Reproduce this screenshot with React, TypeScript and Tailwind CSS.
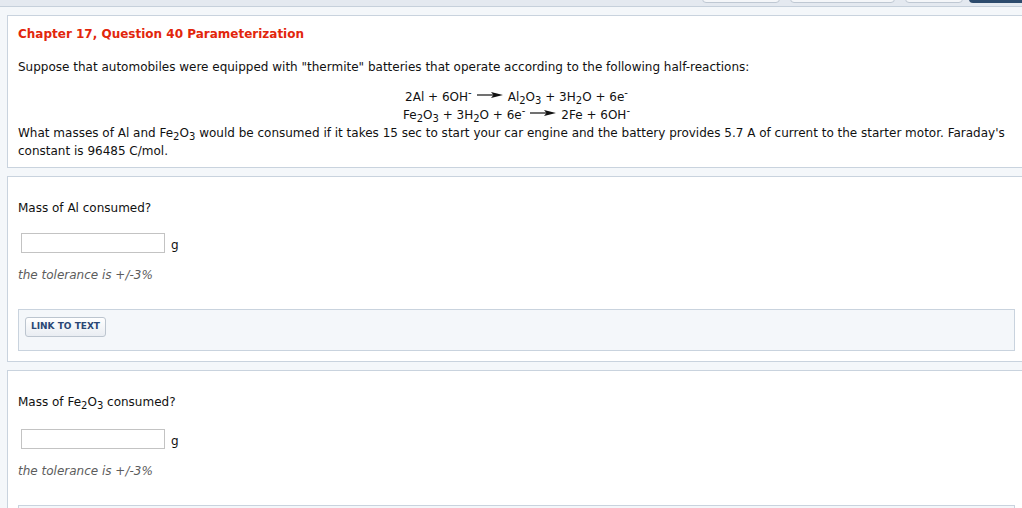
import React from "react";

const Arrow = () => (
  <svg width="26" height="8" viewBox="0 0 26 8" className="inline-block mx-[5px] align-[2px]">
    <line x1="0" y1="4" x2="18" y2="4" stroke="#111" strokeWidth="1.2" />
    <path d="M14 1 L26 4 L14 7 L16.5 4 Z" fill="#111" />
  </svg>
);

const Sub = ({ children }: { children: React.ReactNode }) => (
  <span className="text-[10px] leading-none align-[-3px]">{children}</span>
);
const Sup = () => <span className="text-[10px] leading-none align-[5px]">-</span>;

const AnswerCard = ({ label, topGap }: { label: React.ReactNode; topGap: string }) => (
  <div className="w-[1019px] shrink-0 bg-white border border-[#c9d3de] px-[10px] pt-[22px] pb-[10px]">
    <div className="leading-[18px]">{label}</div>
    <div className={`flex items-end ${topGap} ml-[3px]`}>
      <div className="w-[144px] h-[20px] border border-[#c3c3c3] bg-white" />
      <span className="ml-[6px] leading-[16px]">g</span>
    </div>
    <div className="mt-[13px] leading-[18px] italic text-[#5c5c5c]">the tolerance is +/-3%</div>
    <div className="mt-[25px] h-[42px] border border-[#c9d3de] bg-[#f4f7fa] pt-[6px] px-[6px]">
      <button className="h-[20px] px-[5px] rounded-[3px] border border-[#bcc5cf] bg-gradient-to-b from-white to-[#e9edf2] text-[9px] font-bold text-[#2a4775] leading-none">
        LINK TO TEXT
      </button>
    </div>
  </div>
);

export default function App() {
  return (
    <div
      className="w-[1022px] h-[508px] overflow-hidden bg-[#f4f7fa] text-[12px] text-[#111]"
      style={{ fontFamily: '"DejaVu Sans", Verdana, sans-serif' }}
    >
      <div className="h-[7px] box-border bg-[#e4e9f0] border-b border-[#c6d0db] pb-[3px] flex items-end justify-end overflow-hidden">
        <div className="w-[78px] h-[24px] shrink-0 rounded-[4px] border border-[#bfc8d3] bg-[#f4f6f9]" />
        <div className="w-[105px] h-[24px] shrink-0 ml-[10px] rounded-[4px] border border-[#bfc8d3] bg-[#f4f6f9]" />
        <div className="w-[58px] h-[24px] shrink-0 ml-[10px] rounded-[4px] border border-[#bfc8d3] bg-[#f4f6f9]" />
        <div className="w-[62px] h-[24px] shrink-0 ml-[6px] mr-[-9px] rounded-[4px] bg-[#2d4b6d]" />
      </div>
      <div className="pl-[7px] pt-[8px] flex flex-col gap-[8px]">
        <div className="w-[1019px] shrink-0 bg-white border border-[#c9d3de] px-[10px] pt-[9px] pb-[7px]">
          <div className="leading-[18px] font-bold text-[#e2260c]">Chapter 17, Question 40 Parameterization</div>
          <div className="mt-[15px] leading-[18px]">
            Suppose that automobiles were equipped with "thermite" batteries that operate according to the following half-reactions:
          </div>
          <div className="mt-[12px] text-center">
            <div className="leading-[18px]">
              2Al + 6OH<Sup />
              <Arrow />
              Al<Sub>2</Sub>O<Sub>3</Sub> + 3H<Sub>2</Sub>O + 6e<Sup />
            </div>
            <div className="leading-[18px]">
              Fe<Sub>2</Sub>O<Sub>3</Sub> + 3H<Sub>2</Sub>O + 6e<Sup />
              <Arrow />
              2Fe + 6OH<Sup />
            </div>
          </div>
          <div className="leading-[18px]">
            <span className="whitespace-nowrap">
              What masses of Al and Fe<Sub>2</Sub>O<Sub>3</Sub> would be consumed if it takes 15 sec to start your car engine and the battery provides 5.7 A of current to the starter motor. Faraday's
            </span>
            <br />
            constant is 96485 C/mol.
          </div>
        </div>
        <AnswerCard label={<>Mass of Al consumed?</>} topGap="mt-[16px]" />
        <AnswerCard
          label={
            <>
              Mass of Fe<Sub>2</Sub>O<Sub>3</Sub> consumed?
            </>
          }
          topGap="mt-[18px]"
        />
      </div>
    </div>
  );
}
